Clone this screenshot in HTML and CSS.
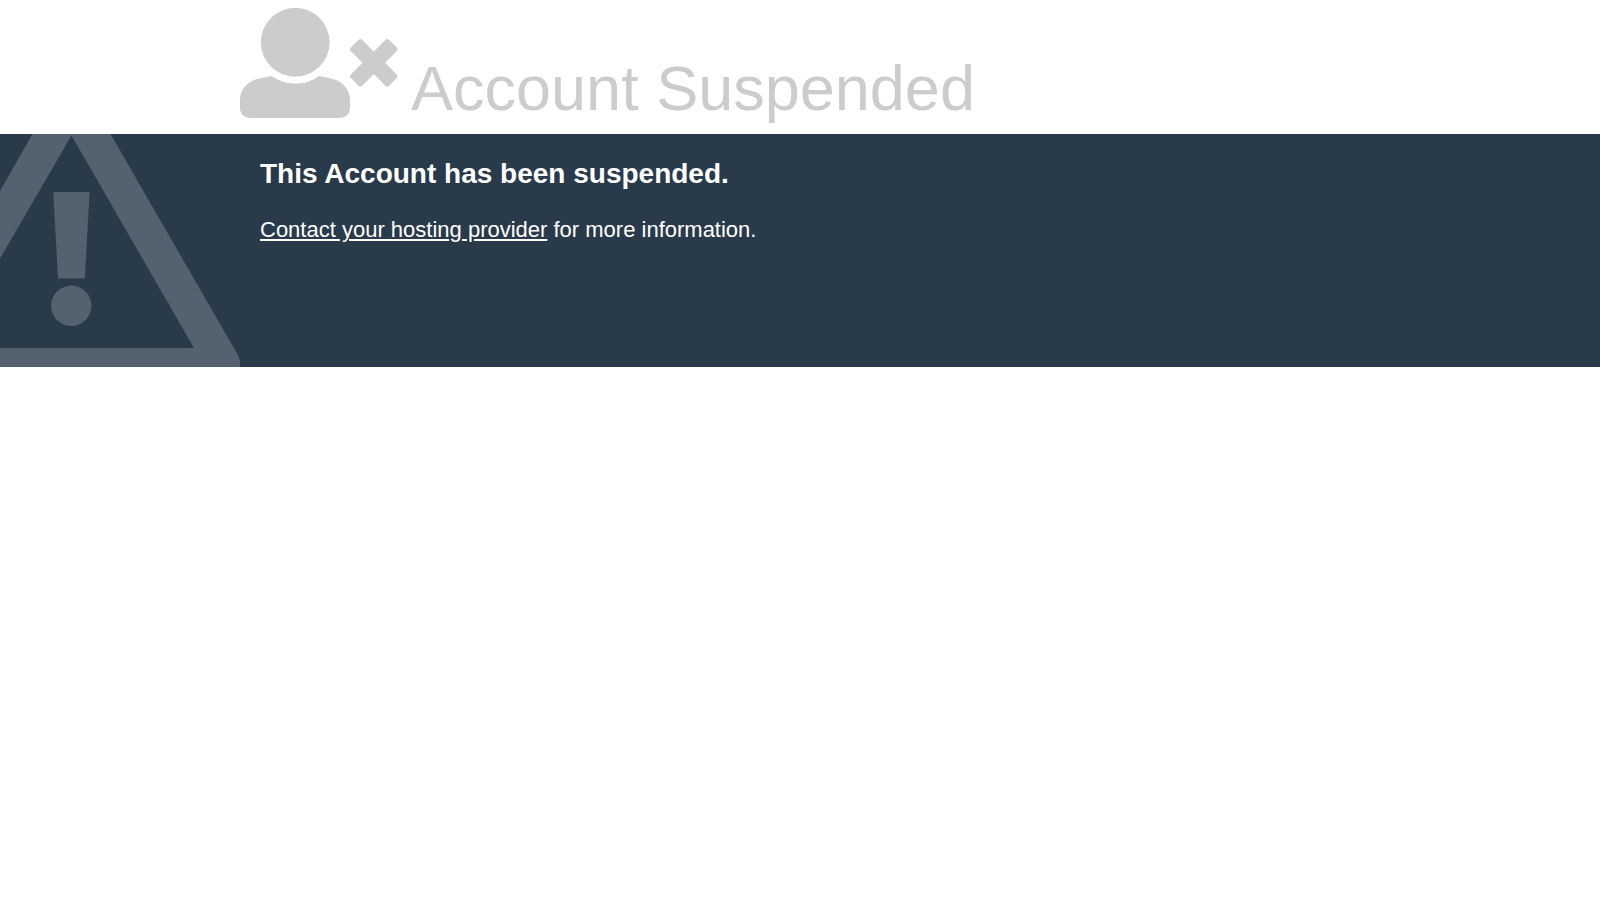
FILE: index.html
```html
<!DOCTYPE html>
<html lang="en">
<head>
    <meta charset="UTF-8">
    <meta name="viewport" content="width=device-width, initial-scale=1.0">
    <title>Account Suspended</title>
    <link rel="stylesheet" href="styles.css">
</head>
<body>
    <header class="status">
        <svg class="status-icon" viewBox="0 0 158 110" aria-hidden="true">
            <circle cx="55.200" cy="34.300" r="34.400"/>
            <path d="M31.500 68 C39 73 46 75.500 55.300 75.500 C64.500 75.500 72 73 79 68 C88 70 94 70.500 100 74 C107 79 110 85 110 93 V99 C110 106 106 110 99 110 H11 C4 110 0 106 0 99 V93 C0 85 3 79 10 74 C16 70.500 22 70 31.500 68 Z"/>
            <g transform="translate(133.800 54.800) rotate(45)">
                <rect x="-27" y="-8" width="54" height="16" rx="2.600"/>
                <rect x="-8" y="-27" width="16" height="54" rx="2.600"/>
            </g>
        </svg>
        <h1 class="status-reason">Account Suspended</h1>
    </header>

    <section class="additional-info">
        <div class="info-image">
            <svg viewBox="0 0 240 233" aria-hidden="true">
                <path fill-rule="evenodd" d="M32.500 0 H110.500 L238.500 222 Q240 225 240 228 V233 H0 V214 H194 L71.500 1.500 L0 124.500 V57 Z"/>
                <path d="M53.300 58 H89.600 L84.800 144.500 H58 Z"/>
                <circle cx="71.300" cy="171.800" r="20.200"/>
            </svg>
        </div>
        <div class="info-content">
            <h2 class="info-heading">This Account has been suspended.</h2>
            <p><a href="#">Contact your hosting provider</a> for more information.</p>
        </div>
    </section>
</body>
</html>
```
FILE: styles.css
```css
* {
    margin: 0;
    padding: 0;
    box-sizing: border-box;
}

body {
    font-family: Arial, "Liberation Sans", Helvetica, sans-serif;
    font-size: 22px;
    line-height: 32px;
    background: #fff;
    color: #ccc;
}

/* Status header */
.status {
    display: flex;
    align-items: flex-end;
    gap: 13px;
    padding: 8px 15%;
}

.status-icon {
    flex: none;
    width: 158px;
    height: 110px;
    margin-bottom: 8px;
    fill: #ccc;
}

.status-reason {
    font-size: 63px;
    font-weight: 400;
    line-height: 76px;
}

/* Info band */
.additional-info {
    display: flex;
    background: #293a4a;
    color: #fff;
}

.info-image {
    flex: none;
    width: 15%;
}

.info-image svg {
    display: block;
    width: 100%;
    fill: #54616e;
}

.info-content {
    padding: 20px;
}

.info-heading {
    font-size: 28px;
    line-height: 40px;
    margin-bottom: 20px;
}

.info-content a {
    color: #fff;
}
```
